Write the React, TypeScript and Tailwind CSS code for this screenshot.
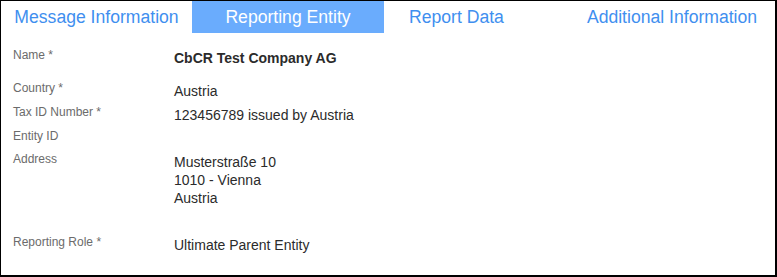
import { type FC, type ReactNode } from 'react';
import { clsx } from 'clsx';

const TABS = [
  { label: 'Message Information', className: 'w-[191px] justify-center' },
  { label: 'Reporting Entity', className: 'w-[192px] justify-center', active: true },
  { label: 'Report Data', className: 'w-[192px] justify-start pl-[25px]' },
  { label: 'Additional Information', className: 'w-[192px] justify-center' },
];

const Row: FC<{ label: string; className?: string; children?: ReactNode }> = ({
  label,
  className,
  children,
}) => (
  <div className={clsx('flex items-start', className)}>
    <div className="w-[161px] shrink-0 text-[12px] leading-[16px] text-[#6b6b6b]">
      {label}
    </div>
    <div className="pt-[2px] text-[14px] leading-[18px] text-[#2b2b2b]">{children}</div>
  </div>
);

export default function App() {
  return (
    <div
      className="h-[277px] w-[777px] border-t border-r-2 border-b-2 border-l border-black bg-white"
      style={{ fontFamily: '"Liberation Sans", Arial, sans-serif' }}
    >
      <div className="flex h-[32px]">
        {TABS.map(tab => (
          <div
            key={tab.label}
            className={clsx(
              'flex h-full items-center whitespace-nowrap text-[17.6px] leading-[32px]',
              tab.className,
              tab.active ? 'bg-[#6aacfd] text-white' : 'text-[#3f8fef]',
            )}
          >
            {tab.label}
          </div>
        ))}
      </div>
      <div className="flex flex-col pt-[14px] pl-[12px]">
        <Row label="Name *" className="h-[33px]">
          <span className="font-bold">CbCR Test Company AG</span>
        </Row>
        <Row label="Country *" className="h-[24px]">
          Austria
        </Row>
        <Row label="Tax ID Number *" className="h-[24px]">
          123456789 issued by Austria
        </Row>
        <Row label="Entity ID" className="h-[23px]" />
        <Row label="Address" className="h-[83px]">
          <div>Musterstraße 10</div>
          <div>1010 - Vienna</div>
          <div>Austria</div>
        </Row>
        <Row label="Reporting Role *">Ultimate Parent Entity</Row>
      </div>
    </div>
  );
}
